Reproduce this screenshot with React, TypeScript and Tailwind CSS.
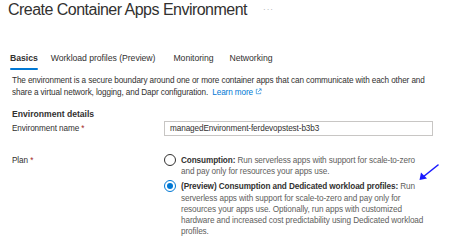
import React from "react";

const font = { fontFamily: '"Liberation Sans", Arial, sans-serif' };

export default function App() {
  return (
    <div
      className="w-[474px] h-[243px] bg-white overflow-hidden text-[#323130] relative"
      style={font}
    >
      {/* Title */}
      <div className="flex items-center pl-[8px] h-[20px]">
        <h1 className="text-[16px] leading-[20px] font-normal tracking-[-0.52px]">
          Create Container Apps Environment
        </h1>
        <span className="ml-[16px] text-[8px] text-[#a19f9d] tracking-[1px] leading-none">
          ···
        </span>
      </div>

      {/* Tabs */}
      <div className="flex pl-[10px] mt-[31px] text-[8.7px] leading-[14px] tracking-[-0.05px]">
        <div className="flex flex-col items-center">
          <span className="font-semibold">Basics</span>
          <span className="mt-[3px] h-[2px] w-full bg-[#0078d4] rounded-sm" />
        </div>
        <span className="ml-[13px]">Workload profiles (Preview)</span>
        <span className="ml-[18px]">Monitoring</span>
        <span className="ml-[16px]">Networking</span>
      </div>

      {/* Description */}
      <p className="pl-[12px] mt-[5px] text-[8.2px] leading-[12px] tracking-[-0.12px]">
        The environment is a secure boundary around one or more container apps that can communicate with each other and
        <br />
        share a virtual network, logging, and Dapr configuration.{" "}
        <span className="text-[#0078d4] ml-[2px]">
          Learn more
          <svg className="inline-block ml-[2px] -mt-[2px]" width="7" height="7" viewBox="0 0 16 16" fill="none" stroke="#0078d4" strokeWidth="1.4">
            <path d="M6 3H3v10h10v-3" />
            <path d="M9 2h5v5M14 2L7 9" />
          </svg>
        </span>
      </p>

      {/* Environment details */}
      <div className="pl-[12px] mt-[9px] text-[8.6px] leading-[12px] font-semibold">
        Environment details
      </div>

      <div className="flex items-center mt-[1px] text-[8.2px] tracking-[-0.1px]">
        <div className="pl-[12px] w-[164px] leading-[12px]">
          Environment name <span className="text-[#a4262c]">*</span>
        </div>
        <div className="w-[269px] h-[15px] border border-[#c8c6c4] flex items-center pl-[5px] leading-[12px]">
          managedEnvironment-ferdevopstest-b3b3
        </div>
      </div>

      {/* Plan */}
      <div className="flex mt-[19px] text-[8.2px] leading-[11.2px] tracking-[-0.1px]">
        <div className="pl-[12px] w-[164px]">
          Plan <span className="text-[#a4262c]">*</span>
        </div>
        <div className="flex flex-col gap-[4px]">
          <div className="flex items-start">
            <span className="w-[12px] h-[12px] rounded-full border border-[#323130] mt-[-1px] mr-[5px] shrink-0" />
            <div className="text-[#605e5c]">
              <span className="font-semibold text-[#323130]">Consumption:</span>
              {"  "}Run serverless apps with support for scale-to-zero
              <br />
              and pay only for resources your apps use.
            </div>
          </div>
          <div className="flex items-start">
            <span className="w-[12px] h-[12px] rounded-full border border-[#0078d4] mt-[-1px] mr-[5px] shrink-0 flex items-center justify-center">
              <span className="w-[6px] h-[6px] rounded-full bg-[#0078d4]" />
            </span>
            <div className="text-[#605e5c]">
              <span className="font-semibold text-[#323130]">
                (Preview) Consumption and Dedicated workload profiles:
              </span>
              {"  "}Run
              <br />
              serverless apps with support for scale-to-zero and pay only for
              <br />
              resources your apps use. Optionally, run apps with customized
              <br />
              hardware and increased cost predictability using Dedicated workload
              <br />
              profiles.
            </div>
          </div>
        </div>
      </div>

      {/* Annotation arrow */}
      <svg className="absolute left-[416px] top-[162px]" width="26" height="22" viewBox="0 0 26 22">
        <line x1="22" y1="3" x2="7" y2="15" stroke="#1a1aff" strokeWidth="1.6" strokeLinecap="round" />
        <path d="M3.5 18 L5 10.5 L11 16.5 Z" fill="#1a1aff" />
      </svg>
    </div>
  );
}
